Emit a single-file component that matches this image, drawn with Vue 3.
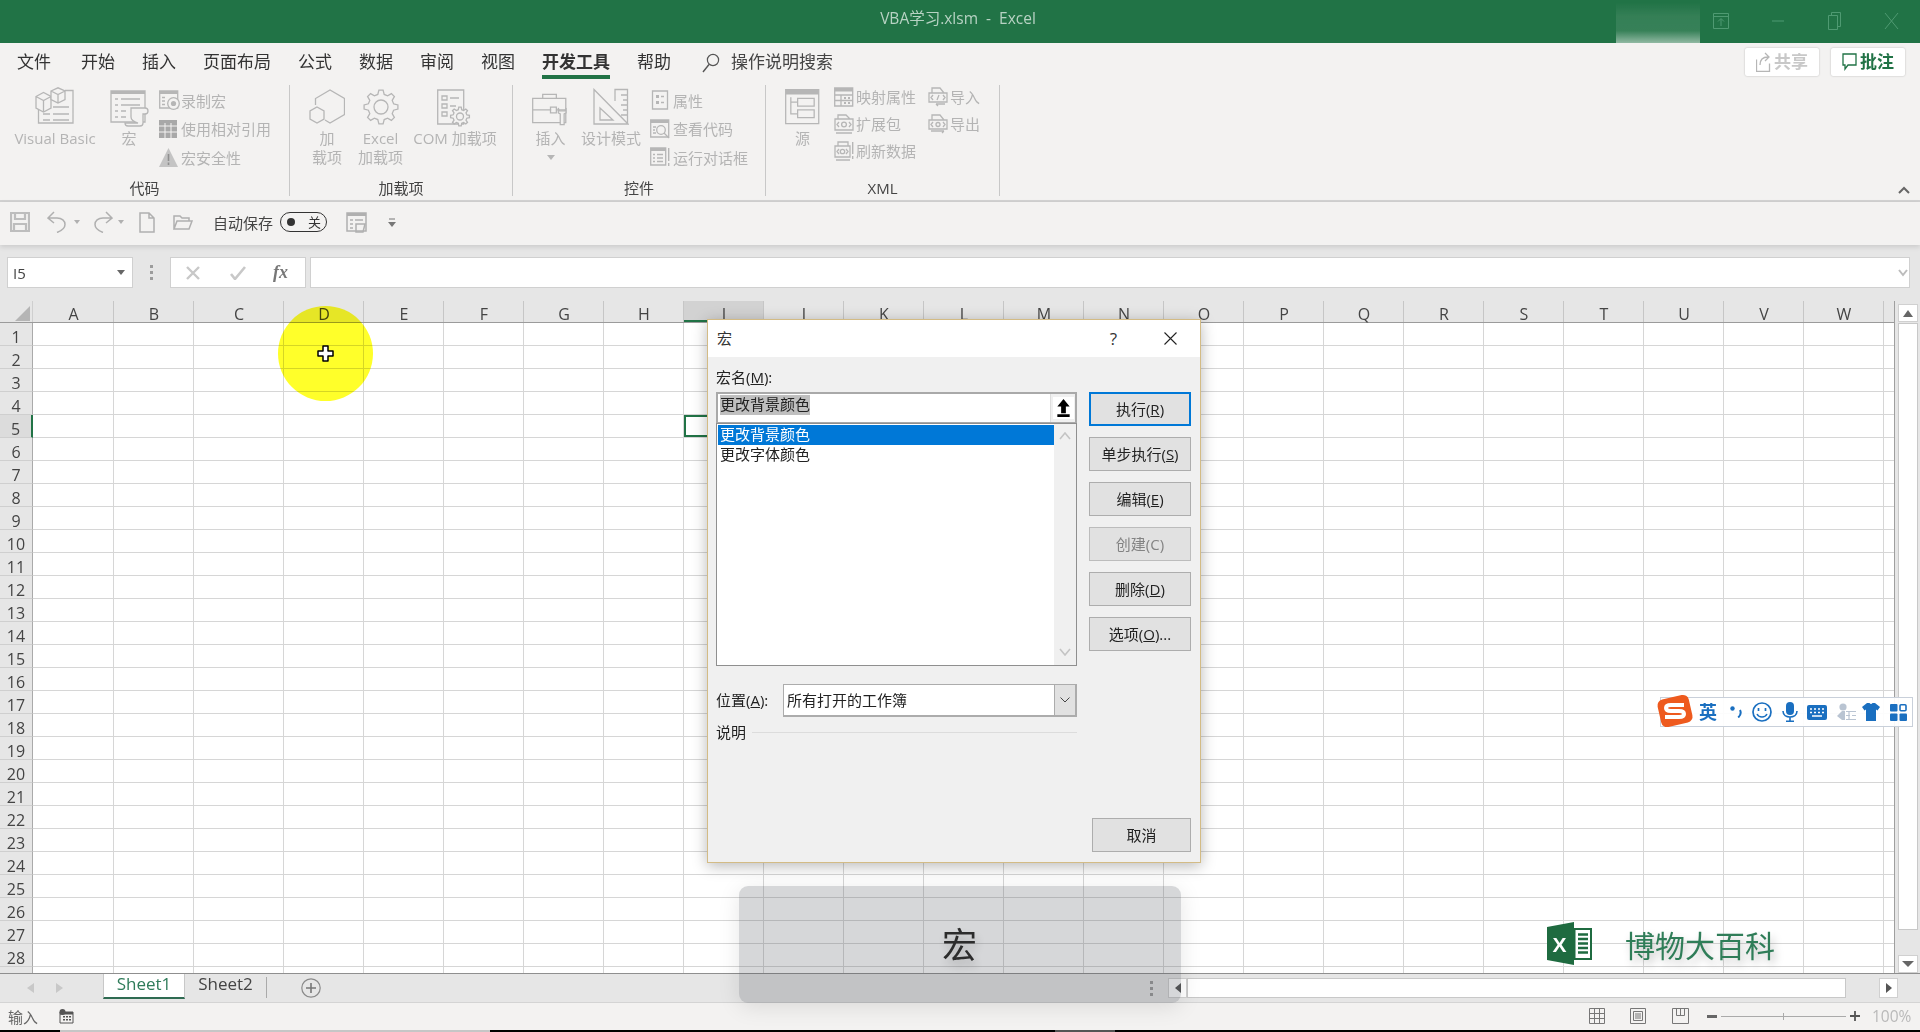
<script setup>
const letters = 'ABCDEFGHIJKLMNOPQRSTUVW'.split('')
const cols = letters.map((name) => ({
  name,
  width: name === 'A' ? 81 : name === 'C' ? 90 : 80
}))
const rows = Array.from({ length: 29 }, (_, i) => i + 1)

function gear(cx, cy, ro, ri, n) {
  const s = (Math.PI * 2) / n
  const pts = []
  for (let i = 0; i < n; i++) {
    const a = i * s
    ;[[-0.32, ri], [-0.16, ro], [0.16, ro], [0.32, ri]].forEach(([k, r]) => {
      pts.push(`${(cx + Math.cos(a + k * s) * r).toFixed(1)} ${(cy + Math.sin(a + k * s) * r).toFixed(1)}`)
    })
  }
  return 'M' + pts.join('L') + 'Z'
}
const bigGear = gear(18, 20, 17, 13, 8)
const smallGear = gear(23, 29.5, 9.5, 7, 8)

const buttons = [
  { t: '执行(', k: 'R', e: ')', primary: true },
  { t: '单步执行(', k: 'S', e: ')' },
  { t: '编辑(', k: 'E', e: ')' },
  { t: '创建(C)', k: '', e: '', off: true },
  { t: '删除(', k: 'D', e: ')' },
  { t: '选项(', k: 'O', e: ')...' }
]
</script>

<template>
  <div class="app">
    <header class="titlebar">
      <div></div>
      <div class="title">VBA学习.xlsm &nbsp;-&nbsp; Excel</div>
      <div class="winbtns">
        <div class="patch"></div>
        <div class="wb"><svg width="16" height="16" viewBox="0 0 16 16"><path class="wi" d="M.5.5h15v15H.5zM.5 3.5h15M8 13V6M5 8.5 8 5.5l3 3"/></svg></div>
        <div class="wb"><svg width="14" height="14" viewBox="0 0 14 14"><path class="wi" d="M1 7h12"/></svg></div>
        <div class="wb"><svg width="13" height="18" viewBox="0 0 13 18"><path class="wi" d="M.5 3.5h9v14h-9zM3.5 3.5V.5h9v14h-3"/></svg></div>
        <div class="wb"><svg width="15" height="18" viewBox="0 0 15 18"><path class="wi" d="M1 1l13 16M14 1 1 17"/></svg></div>
      </div>
    </header>

    <nav class="tabrow">
      <span class="tab first">文件</span>
      <span class="tab wide">开始</span>
      <span class="tab">插入</span>
      <span class="tab">页面布局</span>
      <span class="tab">公式</span>
      <span class="tab">数据</span>
      <span class="tab">审阅</span>
      <span class="tab">视图</span>
      <span class="tab active">开发工具</span>
      <span class="tab">帮助</span>
      <svg class="search" width="19" height="20" viewBox="0 0 19 20"><circle cx="12" cy="7" r="5.6" fill="none" stroke="#555" stroke-width="1.2"/><path d="M8 11.5 2 19" stroke="#555" stroke-width="1.4"/></svg>
      <span class="tell">操作说明搜索</span>
      <span class="pill share">
        <svg width="16" height="20" viewBox="0 0 16 20"><path class="ic" d="M.5 7.5v12h13v-8M4 13c0-5 3-8 8-8M9 1l4 4-4 4"/></svg>共享
      </span>
      <span class="pill comment">
        <svg width="16" height="20" viewBox="0 0 16 20"><path d="M1 2h13v11H6l-3 4v-4H1z" fill="none" stroke="#217346" stroke-width="1.3"/></svg>批注
      </span>
    </nav>

    <section class="ribbon">
      <div class="group g1">
        <div class="gbody">
          <div class="big w82">
            <div class="licon"><svg width="40" height="42" viewBox="0 0 40 42">
              <path class="ic" d="M3.5 20V36H38V3.5H30M18 20h16M8 27h7M18 27h16M8 33h7M18 33h16"/>
              <path class="ic b" d="M1 9.5 8.5 5.5 16 9.5V21L8.5 25 1 21ZM1 9.5 8.5 13.5 16 9.5M8.5 13.5V25"/>
              <path class="ic b" d="M16 4 23 .8 30 4V12.5L23 16 16 12.5ZM16 4 23 7.5 30 4M23 7.5V16"/>
            </svg></div>
            <span>Visual Basic</span>
          </div>
          <div class="big w40 ml13">
            <div class="licon"><svg width="40" height="42" viewBox="0 0 40 42">
              <path class="ic" d="M2 4h34v31H2z"/><path class="f" d="M2 4h34v3H2z"/>
              <path class="ic" d="M6 12h3M12 12h19M6 18h3M12 18h19M6 24h3M12 24h5M6 30h3M12 30h5"/>
              <path class="ic b" d="M22 21h14q3 0 3 3t-3 3h-2V36q0 3-3 3H19q-3 0-3-3h13q-7-2-7-6z"/>
            </svg></div>
            <span>宏</span>
          </div>
          <div class="smalls ml10">
            <div class="small"><span class="sicon"><svg width="21" height="20" viewBox="0 0 21 20"><path class="ic" d="M.7 1h18v17H.7z"/><path class="f" d="M.7 1h18v3H.7z"/><path class="ic" d="M3 7.5h3M3 11h3M3 14.5h3"/><circle class="ic b" cx="14.5" cy="13.5" r="5.8"/><circle class="f" cx="14.5" cy="13.5" r="2.6"/></svg></span>录制宏</div>
            <div class="small"><span class="sicon"><svg width="18" height="18" viewBox="0 0 18 18"><path class="f dark" d="M0 0h18v18H0z"/><path d="M0 6h18M0 12h18M6 3v15M12 3v15" stroke="#f3f2f1"/></svg></span>使用相对引用</div>
            <div class="small"><span class="sicon"><svg width="19" height="19" viewBox="0 0 19 19"><path class="f lite" d="M9.5 0 19 19H0z"/><path d="M9.5 6v7M9.5 14.5v2.4" stroke="#8f8f8f" stroke-width="1.6"/></svg></span>宏安全性</div>
          </div>
        </div>
        <div class="glabel">代码</div>
      </div>
      <div class="sep"></div>

      <div class="group g2">
        <div class="gbody pl19">
          <div class="big w36">
            <div class="licon"><svg width="36" height="42" viewBox="0 0 36 42">
              <path class="ic" d="M6.5 18V11.5L21 3 35.5 11.5V27.5L21 36 16 33"/>
              <path class="ic" d="M8 20 15 24V32L8 36 1 32V24Z"/>
            </svg></div>
            <span>加</span><span>载项</span>
          </div>
          <div class="big w45 ml13">
            <div class="licon"><svg width="36" height="42" viewBox="0 0 36 42">
              <path class="ic" :d="bigGear"/><circle class="ic" cx="18" cy="20" r="7"/>
            </svg></div>
            <span>Excel</span><span>加载项</span>
          </div>
          <div class="big w86 ml9">
            <div class="licon"><svg width="36" height="42" viewBox="0 0 36 42">
              <path class="ic" d="M.7 3h26v34H.7z"/>
              <path class="ic" d="M5 9h5v4H5zM13 11h9M5 17h5v4H5zM13 19h6M5 25h5v4H5z"/>
              <path class="ic b" :d="smallGear"/><circle class="ic" cx="23" cy="29.5" r="3.5"/>
            </svg></div>
            <span>COM 加载项</span>
          </div>
        </div>
        <div class="glabel">加载项</div>
      </div>
      <div class="sep"></div>

      <div class="group g3">
        <div class="gbody pl19">
          <div class="big w37">
            <div class="licon"><svg width="38" height="42" viewBox="0 0 38 42">
              <path class="ic" d="M.7 11h34v25H.7zM.7 23h19M25 23h9M11 11V7h14v4"/>
              <path class="ic" d="M19 20h6v6h-6z"/>
              <path class="ic b" d="M27 21v5l2 1v11h4V27l2-1v-5l-1 3h-6z"/>
            </svg></div>
            <span>插入</span>
            <svg class="mini" width="8" height="5" viewBox="0 0 8 5"><path class="f" d="M0 0h8L4 5z"/></svg>
          </div>
          <div class="big w60 ml12">
            <div class="licon"><svg width="36" height="42" viewBox="0 0 36 42">
              <path class="ic" d="M1 2.5 35 37H1ZM7 21 20 33H7Z"/>
              <path class="ic" d="M22 14V2.5H34.5V36M28 8h6M30 13h4M28 18h6M30 23h4M28 28h6"/>
            </svg></div>
            <span>设计模式</span>
          </div>
          <div class="smalls ml9">
            <div class="small tight"><span class="sicon"><svg width="20" height="20" viewBox="0 0 20 20"><path class="ic" d="M2.5 1h15v18h-15z"/><path class="f" d="M6 5h3v3H6zM6 11h3v3H6z"/><path class="ic" d="M11 6.5h3M11 12.5h3"/></svg></span>属性</div>
            <div class="small tight"><span class="sicon"><svg width="20" height="20" viewBox="0 0 20 20"><path class="ic" d="M.7 1h18v17H.7z"/><path class="f" d="M.7 1h18v3H.7z"/><circle class="ic" cx="11" cy="11" r="4.3"/><path class="ic" d="M14 14l5 5M3 8h3M3 11h2M3 14h3"/></svg></span>查看代码</div>
            <div class="small tight"><span class="sicon"><svg width="20" height="20" viewBox="0 0 20 20"><path class="ic" d="M.7 1h15v17H.7z"/><path class="f" d="M.7 1h15v3H.7zM18 1h1.4v13H18zM18 16h1.4v3H18z"/><path class="ic" d="M3 7.5h2M7 7.5h6M3 11h2M7 11h6M3 14.5h2M7 14.5h6"/></svg></span>运行对话框</div>
          </div>
        </div>
        <div class="glabel">控件</div>
      </div>
      <div class="sep"></div>

      <div class="group g4">
        <div class="gbody pl19">
          <div class="big w35">
            <div class="licon"><svg width="36" height="42" viewBox="0 0 36 42">
              <path class="ic" d="M.7 2h34v35H.7z"/><path class="f" d="M.7 2h34v5H.7z"/>
              <path class="ic" d="M13 11h17v8H13zM13 23h17v8H13zM6 10v17h7M6 15h7"/>
            </svg></div>
            <span>源</span>
          </div>
          <div class="smalls ml14 xml">
            <div class="small wide"><span class="sicon"><svg width="20" height="20" viewBox="0 0 20 20"><path class="ic" d="M.7 1h18v18H.7zM.7 8h18M.7 13.5h18M7 8v11"/><path class="f" d="M.7 1h18v3.5H.7zM10 10h2v2h-2zM14 10h2v2h-2zM10 15h2v2h-2zM14 15h2v2h-2z"/></svg></span>映射属性</div>
            <div class="small wide"><span class="sicon"><svg width="20" height="20" viewBox="0 0 20 20"><path class="ic" d="M4 5V1h8l4 4M1 5h18v11H1zM5 8 3 10.5 5 13M15 8l2 2.5L15 13M2 19h16"/><circle class="ic" cx="10" cy="10.5" r="2.4"/></svg></span>扩展包</div>
            <div class="small wide"><span class="sicon"><svg width="20" height="20" viewBox="0 0 20 20"><path class="ic" d="M4 5V1h10v4M1 5h15v11H1zM5 8 3 10.5 5 13M12 8l2 2.5L12 13M2 19h14"/><circle class="ic" cx="8.5" cy="10.5" r="2.2"/><path class="f" d="M18 1h1.4v12H18zM18 15h1.4v3H18z"/></svg></span>刷新数据</div>
          </div>
          <div class="smalls ml12 xml">
            <div class="small wide"><span class="sicon"><svg width="20" height="20" viewBox="0 0 20 20"><path class="ic" d="M4 6V1h8l4 5M1 6h18v9H1zM5 8 3 10.5 5 13M15 8l2 2.5L15 13M11 8l-2 5M8 17h9M8 17l2 2"/></svg></span>导入</div>
            <div class="small wide"><span class="sicon"><svg width="20" height="20" viewBox="0 0 20 20"><path class="ic" d="M4 6V1h8l4 5M1 6h18v9H1zM5 8 3 10.5 5 13M15 8l2 2.5L15 13M3 17h13M16 17l-2 2"/><circle class="ic" cx="10" cy="10.5" r="2"/></svg></span>导出</div>
          </div>
        </div>
        <div class="glabel">XML</div>
      </div>
      <div class="sep"></div>

      <svg class="collapse" width="12" height="8" viewBox="0 0 12 8"><path d="M1 7l5-5 5 5" fill="none" stroke="#666" stroke-width="2"/></svg>
    </section>

    <section class="qat">
      <svg class="q1" width="20" height="20" viewBox="0 0 20 20"><path class="qk heavy" d="M1 1h18v18H1zM5 1v6h10V1M4 19v-7h12v7"/></svg>
      <svg class="q2" width="21" height="22" viewBox="0 0 21 22"><path class="qk" d="M7 1 1 7l6 5M1 7h9c5 0 8 3 8 6.500 0 3-3 6-8 8"/></svg>
      <svg class="q3" width="6" height="4" viewBox="0 0 6 4"><path class="qf" d="M0 0h6L3 4z"/></svg>
      <svg class="q4" width="20" height="22" viewBox="0 0 20 22"><path class="qk" d="M13 1l6 6-6 5M19 7h-9C5 7 2 10 2 13.500c0 3 3 6 8 8"/></svg>
      <svg class="q5" width="6" height="4" viewBox="0 0 6 4"><path class="qf" d="M0 0h6L3 4z"/></svg>
      <svg class="q6" width="16" height="21" viewBox="0 0 16 21"><path class="qk" d="M1 1h9l5 5v14H1zM10 1v5h5"/></svg>
      <svg class="q7" width="20" height="15" viewBox="0 0 20 15"><path class="qk" d="M1 14V1h6l2 2h7v3M1 14l3-8h15l-3 8z"/></svg>
      <span class="auto">自动保存</span>
      <div class="toggle"><i></i><span>关</span></div>
      <svg class="q8" width="21" height="21" viewBox="0 0 21 21"><path class="qk" d="M1 1h19v18H1z"/><path class="qf" d="M1 1h19v3H1z"/><path class="qk" d="M4 8h3M9 8h8M4 12h3M4 16h3M10 12h9l-2 8h-7z"/></svg>
      <svg class="q9" width="8" height="9" viewBox="0 0 8 9"><path d="M1 1h6" stroke="#777"/><path d="M0 4h8L4 9z" fill="#777"/></svg>
    </section>

    <section class="formula">
      <div class="namebox"><span>I5</span><svg width="8" height="5" viewBox="0 0 8 5"><path d="M0 0h8L4 5z" fill="#666"/></svg></div>
      <div class="fdots"><i></i><i></i><i></i></div>
      <div class="fxbox">
        <svg width="14" height="14" viewBox="0 0 14 14"><path d="M1 1l12 12M13 1 1 13" stroke="#c8c8c8" stroke-width="2.4"/></svg>
        <svg width="16" height="14" viewBox="0 0 16 14"><path d="M1 8l4 5L15 1" fill="none" stroke="#c8c8c8" stroke-width="2.6"/></svg>
        <span class="fx">fx</span>
      </div>
      <div class="finput"><svg width="10" height="8" viewBox="0 0 10 8"><path d="M1 1l4 5 4-5" fill="none" stroke="#bcbcbc" stroke-width="2"/></svg></div>
    </section>

    <section class="sheet">
      <div class="grid">
        <div class="hrow">
          <div class="corner"><svg width="16" height="16" viewBox="0 0 16 16"><path d="M15 1v15H0z" fill="#b5b5b5"/></svg></div>
          <div v-for="c in cols" :key="c.name" class="hcell" :class="{ on: c.name === 'I' }" :style="{ width: c.width + 'px' }">{{ c.name }}</div>
          <div class="hfill"></div>
        </div>
        <div v-for="r in rows" :key="r" class="row">
          <div class="rh" :class="{ on: r === 5 }">{{ r &lt; 29 ? r : '' }}</div>
          <div v-for="c in cols" :key="c.name" class="cell" :class="{ sel: r === 5 && c.name === 'I' }" :style="{ width: c.width + 'px' }"></div>
          <div class="cfill"></div>
        </div>
      </div>
      <div class="vscroll">
        <div class="sbtn up"><svg width="10" height="7" viewBox="0 0 10 7"><path d="M5 0l5 7H0z" fill="#666"/></svg></div>
        <div class="vthumb"></div>
        <div class="sbtn down"><svg width="12" height="6" viewBox="0 0 12 6"><path d="M0 0h12L6 6z" fill="#666"/></svg></div>
      </div>
    </section>

    <section class="tabbar">
      <div class="navs">
        <svg width="7" height="10" viewBox="0 0 7 10"><path d="M7 0v10L0 5z" fill="#c8c8c8"/></svg>
        <svg width="7" height="10" viewBox="0 0 7 10"><path d="M0 0v10l7-5z" fill="#c8c8c8"/></svg>
      </div>
      <div class="sheettab current">Sheet1</div>
      <div class="sheettab">Sheet2</div>
      <div class="plus"><svg width="20" height="20" viewBox="0 0 20 20"><circle cx="10" cy="10" r="9.2" fill="none" stroke="#8a8a8a" stroke-width="1.2"/><path d="M10 5v10M5 10h10" stroke="#777" stroke-width="1.6"/></svg></div>
      <div class="hdots"><i></i><i></i><i></i></div>
      <div class="hscroll">
        <div class="hbtn"><svg width="6" height="10" viewBox="0 0 6 10"><path d="M6 0v10L0 5z" fill="#555"/></svg></div>
        <div class="hthumb"></div>
        <div class="hbtn last"><svg width="6" height="10" viewBox="0 0 6 10"><path d="M0 0v10l6-5z" fill="#555"/></svg></div>
      </div>
    </section>

    <footer class="status">
      <span class="mode">输入</span>
      <svg class="st-macro" width="15" height="15" viewBox="0 0 15 15"><path d="M1 3h13v11H1z" fill="none" stroke="#555"/><path d="M1 3h13v2.5H1zM4 7h2v1.5H4zM7 7h2v1.5H7zM10 7h2v1.5h-2zM4 10h2v1.5H4zM7 10h2v1.5H7zM10 10h2v1.5h-2z" fill="#555"/><circle cx="3.5" cy="3" r="3" fill="#555"/></svg>
      <svg class="st-first" width="16" height="16" viewBox="0 0 16 16"><path class="st" d="M.5.5h15v15H.5zM5.5.5v15M10.5.5v15M.5 5.5h15M.5 10.5h15"/></svg>
      <svg class="st-page" width="16" height="16" viewBox="0 0 16 16"><path class="st" d="M.5.5h15v15H.5zM3.5 3.5h9v9h-9zM5 6h6M5 8h6M5 10h6"/></svg>
      <svg class="st-break" width="17" height="16" viewBox="0 0 17 16"><path class="st" d="M.5.5h16v15H.5zM4.5.5v7h8v-7M8.5.5v7"/></svg>
      <svg class="st-minus" width="10" height="3" viewBox="0 0 10 3"><path d="M0 0h10v3H0z" fill="#666"/></svg>
      <div class="slider"><i></i></div>
      <svg class="st-plus" width="10" height="10" viewBox="0 0 10 10"><path d="M5 0v10M0 5h10" stroke="#555" stroke-width="1.8"/></svg>
      <span class="zoom">100%</span>
    </footer>
    <div class="strip"></div>

    <!-- things that float over the window -->
    <div class="spot"></div>
    <svg class="cursor" width="17" height="17" viewBox="0 0 17 17"><path d="M6 1h5v5h5v5h-5v5H6v-5H1V6h5z" fill="#fff" stroke="#000" stroke-width="1.5" stroke-linejoin="round"/></svg>

    <div class="keytip"><span>宏</span></div>

    <div class="dialog">
      <div class="dhead">
        <span class="dtitle">宏</span>
        <span class="dq">?</span>
        <svg class="dx" width="13" height="13" viewBox="0 0 13 13"><path d="M.5.5l12 12M12.5.5l-12 12" stroke="#222" stroke-width="1.1"/></svg>
      </div>
      <div class="dbody">
        <div class="dleft">
          <div class="dlabel">宏名(<u>M</u>):</div>
          <div class="dfield">
            <div class="dinput"><span>更改背景颜色</span></div>
            <div class="dup"><svg width="15" height="19" viewBox="0 0 15 19"><path d="M7.5 0 14 8H10V15H5V8H1zM1 16h13v3H1z" fill="#000"/></svg></div>
          </div>
          <div class="dlist">
            <div class="ditems">
              <div class="ditem picked">更改背景颜色</div>
              <div class="ditem">更改字体颜色</div>
            </div>
            <div class="dlscroll">
              <svg width="12" height="8" viewBox="0 0 12 8"><path d="M1 7l5-6 5 6" fill="none" stroke="#c4c4c4" stroke-width="1.6"/></svg>
              <svg width="12" height="8" viewBox="0 0 12 8"><path d="M1 1l5 6 5-6" fill="none" stroke="#c4c4c4" stroke-width="1.6"/></svg>
            </div>
          </div>
          <div class="dwhere">
            <span class="dup1">位置(<u>A</u>):</span>
            <div class="dcombo">
              <span class="dcombotext">所有打开的工作簿</span>
              <div class="dcarrow"><svg width="10" height="6" viewBox="0 0 10 6"><path d="M.5.5 5 5 9.5.5" fill="none" stroke="#444"/></svg></div>
            </div>
          </div>
          <div class="ddesc"><span class="dup1">说明</span><i></i></div>
        </div>
        <div class="dright">
          <div v-for="b in buttons" :key="b.t" class="dbtn" :class="{ primary: b.primary, off: b.off }">{{ b.t }}<u v-if="b.k">{{ b.k }}</u>{{ b.e }}</div>
          <div class="dbtn cancel">取消</div>
        </div>
      </div>
    </div>

    <div class="ime">
      <svg class="ime-logo" width="38" height="36" viewBox="0 0 38 36">
        <rect x="3" y="4" width="32" height="28" rx="6" fill="#ee5a1e" transform="rotate(-13 19 18)"/>
        <path d="M28 12H15q-5 0-5 3t5 3h8q5 0 5 3t-5 3H9" fill="none" stroke="#fff" stroke-width="4"/>
      </svg>
      <span class="ime-ying">英</span>
      <svg class="i-punct" width="12" height="12" viewBox="0 0 12 12"><circle cx="2.5" cy="2.5" r="2.2" fill="#1a6fc0"/><path d="M10 4c1.200 2.500.5 5.500-1.800 7.500" fill="none" stroke="#1a6fc0" stroke-width="2"/></svg>
      <svg class="i-smile" width="20" height="20" viewBox="0 0 20 20"><circle cx="10" cy="10" r="9" fill="none" stroke="#1a6fc0" stroke-width="1.7"/><path d="M6.5 6v3M13.5 6v3" stroke="#1a6fc0" stroke-width="1.7"/><path d="M5 12c2 4 8 4 10 0" fill="none" stroke="#1a6fc0" stroke-width="1.5"/></svg>
      <svg class="i-mic" width="16" height="20" viewBox="0 0 16 20"><rect x="4" y="0" width="8" height="13" rx="4" fill="#1a6fc0"/><path d="M1 9c0 8 14 8 14 0M8 15v4M4 19.300h8" fill="none" stroke="#1a6fc0" stroke-width="1.6"/></svg>
      <svg class="i-kbd" width="20" height="15" viewBox="0 0 20 15"><rect width="20" height="15" rx="2" fill="#1a6fc0"/><path d="M3 4h2M7 4h2M11 4h2M15 4h2M3 7.500h2M7 7.500h2M11 7.500h2M15 7.500h2M5 11h10" stroke="#fff" stroke-width="1.6"/></svg>
      <svg class="i-user" width="21" height="18" viewBox="0 0 21 18"><circle cx="7" cy="4" r="3.600" fill="#b9c4d2"/><path d="M1 13l5-5h3v9H6z" fill="#b9c4d2"/><path d="M10 8.500h10M10 12.500h4M16 12.500h4M10 16.500h10M13 9v7" stroke="#b9c4d2" stroke-width="1.200"/></svg>
      <svg class="i-shirt" width="18" height="18" viewBox="0 0 18 18"><path d="M5 0h2.500q1.500 2 3 0H13l5 4-2.500 3.500L14 6.500V18H4V6.500L2.500 7.500 0 4z" fill="#1a6fc0"/></svg>
      <svg class="i-grid" width="17" height="17" viewBox="0 0 17 17"><rect width="7.500" height="7.500" rx="1" fill="#1a6fc0"/><rect x="10" y=".8" width="6" height="6" rx="1" fill="none" stroke="#1a6fc0" stroke-width="1.600"/><rect y="9.500" width="7.500" height="7.500" rx="1" fill="#1a6fc0"/><rect x="9.500" y="9.500" width="7.500" height="7.500" rx="1" fill="#1a6fc0"/></svg>
    </div>

    <div class="brand">
      <svg width="45" height="43" viewBox="0 0 45 43">
        <path d="M0 5 27 0V43L0 38z" fill="#1f6b40"/>
        <path d="M27 6h18v32H27z" fill="#1f6b40"/>
        <path d="M28.500 8h14.500v28H28.500z" fill="#fff"/>
        <path d="M31 12.500h10M31 17h10M31 21.500h10M31 26h10M31 30.500h10" stroke="#1f6b40" stroke-width="2.500"/>
        <text x="5.500" y="30" font-family="Liberation Sans, sans-serif" font-weight="700" font-size="21" fill="#fff">X</text>
      </svg>
      <span class="brandname">博物大百科</span>
    </div>
  </div>
</template>

<style>
html, body { margin: 0; padding: 0; background: #f3f2f1; }
</style>

<style scoped>
.app {
  position: relative;
  width: 1920px;
  height: 1032px;
  overflow: hidden;
  display: flex;
  flex-direction: column;
  background: #f3f2f1;
  font-family: "Open Sans", "Noto Sans CJK SC", sans-serif;
  color: #333;
}
.app * { box-sizing: border-box; }

/* title bar */
.titlebar {
  height: 43px;
  flex: none;
  background: #217346;
  display: grid;
  grid-template-columns: 1fr auto 1fr;
  align-items: center;
}
.title { color: #b7d2c3; font-size: 15.5px; margin-top: -8px; margin-right: 4px; }
.winbtns { position: relative; display: flex; justify-content: flex-end; height: 43px; }
.wb { width: 57px; display: flex; align-items: center; justify-content: center; margin-top: -1px; }
.wi { fill: none; stroke: #4f9a72; stroke-width: 1; }
.patch {
  position: absolute;
  right: 220px;
  top: 2px;
  width: 84px;
  height: 41px;
  background: linear-gradient(rgba(255,255,255,0), rgba(255,255,255,.09) 35%, rgba(255,255,255,.1) 70%, rgba(255,255,255,.5));
  filter: blur(.6px);
}

/* tabs */
.tabrow {
  height: 37px;
  flex: none;
  display: flex;
  align-items: stretch;
  padding-left: 17px;
  gap: 27px;
  font-size: 17px;
  line-height: 38px;
}
.tab { color: #333; }
.tab.wide { margin-left: 3px; }
.tab.active {
  font-weight: 700;
  color: #333;
  background: linear-gradient(#217346, #217346) left bottom 1px / 100% 4px no-repeat;
}
.search { align-self: center; margin: 2px -16px 0 3px; }
.tell { color: #444; }
.pill {
  height: 28px;
  margin-top: 5px;
  background: #fff;
  box-shadow: 0 0 2px rgba(0,0,0,.25);
  border-radius: 2px;
  width: 74px;
  display: flex;
  align-items: center;
  justify-content: center;
  gap: 2px;
  font-weight: 700;
  font-size: 17px;
  line-height: 28px;
}
.share { color: #c8c8c8; margin-left: auto; }
.comment { color: #217346; margin-left: -15px; margin-right: 15px; }

/* ribbon */
.ribbon {
  height: 122px;
  flex: none;
  display: flex;
  border-bottom: 2px solid #d2d2d2;
  font-size: 15px;
  color: #b4b4b4;
}
.group { display: flex; flex-direction: column; }
.g1 { width: 289px; }
.g2 { width: 222px; }
.g3 { width: 252px; }
.g4 { width: 233px; }
.sep { width: 1px; height: 111px; margin-top: 5px; background: #c8c8c8; flex: none; }
.gbody { flex: 1; display: flex; padding-top: 6px; min-height: 0; }
.g1 .gbody { padding-left: 14px; }
.pl19 { padding-left: 19px; }
.glabel { height: 20px; margin-bottom: 2px; line-height: 20px; text-align: center; color: #444; font-size: 15px; }
.big { display: flex; flex-direction: column; align-items: center; line-height: 19px; white-space: nowrap; flex: none; }
.licon { height: 43px; width: 100%; display: flex; justify-content: center; padding-top: 1px; }
.mini { margin-top: 7px; }
.w82 { width: 82px; } .w40 { width: 40px; } .w36 { width: 36px; } .w45 { width: 45px; }
.w86 { width: 86px; } .w37 { width: 37px; } .w60 { width: 60px; } .w35 { width: 35px; }
.ml9 { margin-left: 9px; } .ml10 { margin-left: 10px; } .ml12 { margin-left: 12px; }
.ml13 { margin-left: 13px; } .ml14 { margin-left: 14px; }
.smalls { display: flex; flex-direction: column; }
.small { height: 28.5px; display: flex; align-items: center; white-space: nowrap; }
.small.wide { height: 27px; }
.small.tight .sicon { width: 23px; }
.xml { margin-top: -3px; }
.sicon { width: 22px; display: flex; align-items: center; flex: none; }
.collapse { margin: 106px 0 0 auto; margin-right: 10px; }
.ic { fill: none; stroke: #b6b6b6; stroke-width: 1.3; }
.ic.b { fill: #f3f2f1; }
.f { fill: #b6b6b6; stroke: none; }
.f.dark { fill: #a8a8a8; }
.f.lite { fill: #c4c4c4; }

/* quick access */
.qat {
  height: 43px;
  flex: none;
  display: flex;
  align-items: center;
  padding: 0 0 3px 10px;
  position: relative;
  z-index: 2;
  background: #f3f2f1;
  box-shadow: 0 2px 5px rgba(0,0,0,.12);
  font-size: 15px;
}
.qk { fill: none; stroke: #b0b0b0; stroke-width: 1.5; }
.qk.heavy { stroke: #bdbdbd; stroke-width: 2.2; }
.qf { fill: #b0b0b0; }
.q2 { margin-left: 17px; } .q3 { margin-left: 6px; } .q4 { margin-left: 13px; }
.q5 { margin-left: 5px; } .q6 { margin-left: 15px; } .q7 { margin-left: 18px; }
.q8 { margin-left: 19px; } .q9 { margin-left: 21px; }
.auto { margin-left: 20px; color: #444; }
.toggle {
  margin-left: 7px;
  width: 47px;
  height: 20px;
  border: 1.5px solid #333;
  border-radius: 10px;
  display: flex;
  align-items: center;
  padding-left: 6px;
  font-size: 13px;
  line-height: 17px;
}
.toggle i { width: 8px; height: 8px; background: #333; border-radius: 50%; }
.toggle span { margin-left: 13px; }

/* formula bar */
.formula {
  height: 56px;
  flex: none;
  background: #e6e6e6;
  display: flex;
  padding: 12px 10px 0 7px;
  align-items: flex-start;
}
.namebox, .fxbox, .finput { height: 31px; background: #fff; border: 1px solid #d0d0d0; display: flex; align-items: center; }
.namebox { width: 126px; padding: 0 7px 0 5px; justify-content: space-between; font-size: 15px; color: #444; }
.fdots { width: 37px; height: 31px; display: flex; flex-direction: column; align-items: center; justify-content: center; gap: 3px; }
.fdots i, .hdots i { width: 3px; height: 3px; background: #9c9c9c; display: block; }
.fxbox { width: 136px; padding-left: 15px; }
.fxbox svg:nth-child(2) { margin-left: 30px; }
.fx { margin-left: 27px; font: italic 700 18px "Liberation Serif", serif; color: #777; }
.finput { flex: 1; margin-left: 4px; justify-content: flex-end; padding-right: 1px; }

/* sheet */
.sheet { height: 672px; flex: none; display: flex; background: #e6e6e6; }
.grid { width: 1895px; flex: none; height: 672px; overflow: hidden; background: #fff; border-right: 1px solid #9f9f9f; }
.hrow { height: 22px; display: flex; background: #e6e6e6; border-bottom: 1px solid #9b9b9b; }
.corner { width: 33px; flex: none; padding: 4px 0 0 15px; border-right: 1px solid #cfcfcf; }
.corner svg { display: block; }
.hcell { flex: none; text-align: center; font-size: 16px; line-height: 22px; padding: 2px 0 0 1px; color: #444; border-right: 1px solid #c6c6c6; }
.hcell.on { background: #d2d2d2; box-shadow: inset 0 -2px 0 #217346; }
.hfill { flex: 1; }
.row { height: 23px; display: flex; }
.rh { width: 33px; flex: none; background: #e6e6e6; border-right: 1px solid #aaa; border-bottom: 1px solid #cfcfcf; text-align: center; font-size: 16px; line-height: 22px; padding-top: 3px; color: #444; }
.rh.on { background: #dcdcdc; border-right: 2px solid #217346; }
.cell { flex: none; border-right: 1px solid #d6d6d6; border-bottom: 1px solid #d6d6d6; }
.cell.sel { box-shadow: inset 0 0 0 2px #217346; }
.cfill { flex: 1; border-bottom: 1px solid #d6d6d6; }
.vscroll { flex: 1; display: flex; flex-direction: column; padding: 3px 2px 0 3px; }
.sbtn { height: 18px; background: #fff; border: 1px solid #d0d0d0; display: flex; align-items: center; justify-content: center; flex: none; }
.vthumb { height: 607px; margin-top: 1px; background: #fff; border: 1px solid #c8c8c8; flex: none; }
.down { margin-top: 25px; }

/* tab bar */
.tabbar {
  height: 30px;
  flex: none;
  background: #e6e6e6;
  border-top: 1px solid #8f8f8f;
  border-bottom: 1px solid #d4d4d4;
  display: flex;
}
.navs { width: 103px; display: flex; align-items: center; padding-left: 27px; gap: 22px; }
.sheettab { width: 82px; height: 25px; font-size: 17px; line-height: 20px; text-align: center; color: #444; position: relative; }
.sheettab.current { background: #fff; color: #2f7c5a; border-bottom: 2px solid #2f6b52; border-left: 1px solid #c8c8c8; border-right: 1px solid #c8c8c8; }
.sheettab:not(.current) { border-right: 1px solid #aaa; height: 21px; margin-top: 3px; line-height: 14px; }
.plus { margin-left: 34px; padding-top: 4px; }
.hdots { margin-left: 829px; height: 28px; width: 3px; display: flex; flex-direction: column; justify-content: center; gap: 3px; }
.hscroll { margin-left: 15px; width: 729px; display: flex; padding-top: 4px; height: 24px; }
.hbtn { width: 19px; height: 20px; background: #fff; border: 1px solid #d0d0d0; display: flex; align-items: center; justify-content: center; flex: none; }
.hbtn.last { margin-left: 33px; }
.hthumb { width: 659px; height: 20px; background: #fff; border: 1px solid #c8c8c8; flex: none; }

/* status */
.status { height: 27px; flex: none; display: flex; align-items: center; padding: 0 0 1px 8px; font-size: 15px; color: #666; background: #f3f2f1; }
.st-macro { margin-left: 21px; }
.st-first { margin-left: auto; }
.st { fill: none; stroke: #777; }
.st-page { margin-left: 25px; } .st-break { margin-left: 26px; }
.st-minus { margin-left: 18px; }
.slider { width: 125px; height: 1px; background: #aaa; margin-left: 4px; position: relative; }
.slider i { position: absolute; left: 62px; top: -3px; width: 1px; height: 7px; background: #aaa; }
.st-plus { margin-left: 4px; }
.zoom { margin-left: 12px; width: 48px; color: #b9b9b9; font-size: 15.5px; }
.strip { height: 3px; flex: none; background: linear-gradient(90deg, #000 60px, #c6c6c6 60px, #c6c6c6 490px, #000 490px, #000 1055px, #555 1055px, #555 1115px, #000 1115px); }

/* floating */
.spot {
  position: absolute;
  left: 277.500px;
  top: 305.500px;
  width: 95px;
  height: 95px;
  border-radius: 50%;
  background: #ffff2a;
  mix-blend-mode: multiply;
  filter: blur(.7px);
  z-index: 3;
}
.cursor { position: absolute; left: 317px; top: 345px; z-index: 4; }
.keytip {
  position: absolute;
  left: 739px;
  top: 886px;
  width: 442px;
  height: 117px;
  border-radius: 9px;
  background: rgba(70,72,80,.22);
  box-shadow: 0 4px 22px rgba(0,0,0,.1);
  display: flex;
  align-items: center;
  justify-content: center;
  z-index: 4;
}
.keytip span { font-size: 35px; color: #2c2c2c; line-height: 1; margin-left: -1px; text-shadow: 2px 6px 8px rgba(0,0,0,.2); }

.dialog {
  position: absolute;
  left: 707px;
  top: 319px;
  width: 494px;
  height: 544px;
  background: #f0f0f0;
  border: 1px solid #d3bb85;
  box-shadow: 0 3px 14px rgba(0,0,0,.28);
  display: flex;
  flex-direction: column;
  font-size: 15px;
  color: #222;
  z-index: 5;
}
.dhead { height: 37px; flex: none; background: #fff; display: flex; align-items: center; padding-left: 9px; }
.dtitle { color: #333; margin-top: -2px; }
.dq { margin-left: auto; font-size: 17px; color: #333; }
.dx { margin: 0 23px 0 47px; }
.dbody { flex: 1; display: flex; gap: 12px; padding: 0 9px 10px 8px; min-height: 0; }
.dleft { width: 361px; flex: none; }
.dlabel { height: 20px; line-height: 18px; margin-top: 11px; }
.dfield { height: 31px; margin-top: 4px; display: flex; border: 2px solid #a9a9a9; border-bottom-width: 1px; background: #fff; }
.dinput { flex: 1; padding: 1px 0 0 2px; line-height: 18px; }
.dinput span { background: #bfbfbf; display: inline-block; height: 20px; }
.dup { width: 25px; background: #f0f0f0; display: flex; align-items: center; justify-content: center; border-left: 1px solid #ddd; }
.dup svg { background: #fff; width: 21px; height: 22px; padding: 2px 3px; }
.dlist { height: 243px; display: flex; background: #fff; border: 1px solid #8f8f8f; padding: 1px 0 0 1px; }
.ditems { flex: 1; }
.ditem { height: 20px; line-height: 18px; padding-left: 2px; }
.ditem.picked { background: #0078d7; color: #fff; }
.dlscroll { width: 22px; background: #f0f0f0; display: flex; flex-direction: column; align-items: center; justify-content: space-between; padding: 8px 0 9px; margin-top: -1px; }
.dwhere { margin-top: 18px; height: 33px; display: flex; align-items: center; justify-content: space-between; }
.dup1 { margin-top: -2px; }
.dcombo { width: 294px; height: 33px; border: 1px solid #acacac; border-width: 1px 2px 2px 1px; background: #fff; display: flex; align-items: center; padding-left: 3px; }
.dcombotext { flex: 1; margin-top: -2px; }
.dcarrow { width: 21px; height: 100%; background: #e1e1e1; border-left: 1px solid #acacac; display: flex; align-items: center; justify-content: center; }
.ddesc { margin-top: 6px; height: 20px; display: flex; align-items: center; line-height: 20px; }
.ddesc i { flex: 1; height: 1px; background: #dcdcdc; margin-left: 6px; margin-top: -2px; }
.dright { flex: 1; display: flex; flex-direction: column; align-items: flex-end; padding-top: 35px; gap: 11px; }
.dbtn { width: 102px; height: 34px; background: #e1e1e1; border: 1px solid #adadad; display: flex; align-items: center; justify-content: center; white-space: pre; line-height: 1; }
.dbtn.primary { border: 2px solid #0078d7; }
.dbtn.off { color: #838383; border-color: #bcbcbc; }
.dbtn u { text-underline-offset: 1px; }
.dbtn.cancel { width: 99px; margin-top: auto; }

.ime {
  position: absolute;
  left: 1660px;
  top: 697px;
  width: 253px;
  height: 30px;
  background: rgba(255,255,255,.93);
  border: 1px solid #c9d0da;
  display: flex;
  align-items: center;
  padding-left: 38px;
  z-index: 4;
}
.ime-logo { position: absolute; left: -5px; top: -5px; }
.ime-ying { color: #1a6fc0; font-size: 18px; font-weight: 700; line-height: 1; width: 18px; }
.i-punct { margin-left: 13px; } .i-smile { margin-left: 10px; } .i-mic { margin-left: 10px; }
.i-kbd { margin-left: 9px; } .i-user { margin-left: 9px; } .i-shirt { margin-left: 5px; } .i-grid { margin-left: 10px; }

.brand { position: absolute; left: 1547px; top: 922px; display: flex; align-items: center; gap: 33px; z-index: 3; }
.brandname { font-size: 30px; color: #2f7d58; line-height: 1; text-shadow: 3px 5px 8px rgba(0,0,0,.25); margin-top: 4px; }
</style>
